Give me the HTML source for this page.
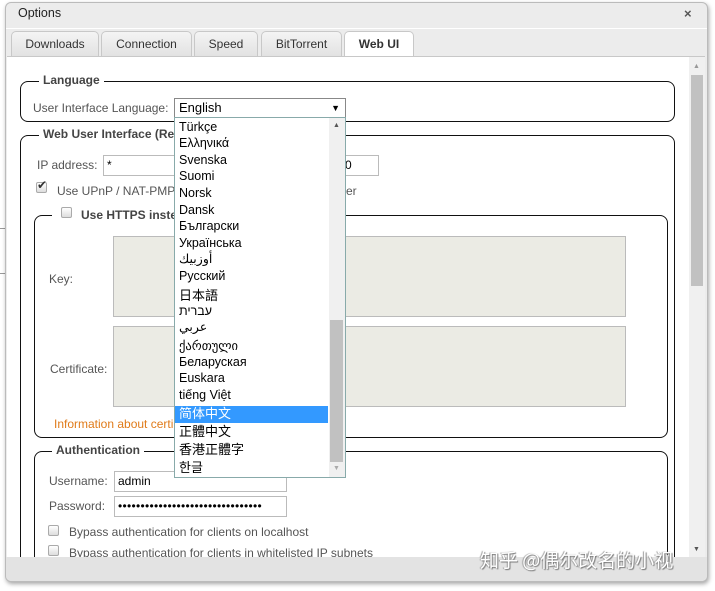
<!DOCTYPE html>
<html><head><meta charset="utf-8">
<style>
*{box-sizing:border-box;margin:0;padding:0}
body{width:715px;height:591px;overflow:hidden;background:#fff;font-family:"Liberation Sans","Noto Sans CJK SC",sans-serif;position:relative}
.a{position:absolute}
.dlg{left:5px;top:2px;width:703px;height:580px;background:#ececec;border:1px solid #bbb;border-radius:6px;box-shadow:1px 2px 4px rgba(0,0,0,.35)}
.lbl{font-size:12px;color:#555}
.fs{border:1px solid #111;border-radius:8px}
.lg{background:#fff;padding:0 4px;font-size:12px;font-weight:bold;color:#444}
.tab{top:31px;height:25px;border:1px solid #c8c8c8;border-bottom:none;border-radius:5px 5px 0 0;background:linear-gradient(#f4f4f4,#e2e2e2);font-size:12px;color:#333;text-align:center;line-height:24px}
.inp{border:1px solid #bbb;background:#fff;font-size:12px;padding-left:3px}
.ta{background:#ebebe4;border:1px solid #bbb}
.cb{width:11px;height:11px;border:1px solid #aaa;border-radius:2px;background:linear-gradient(#fff,#ddd)}
.it{left:179px;font-size:12.5px;color:#000;line-height:17px;height:17px;white-space:nowrap}
.cj{font-size:13px}
</style></head><body>
<div class="a" style="left:0;top:228px;width:6px;height:1px;background:#999"></div>
<div class="a" style="left:0;top:273px;width:6px;height:1px;background:#999"></div>
<div class="a dlg"></div>
<div class="a" style="left:18px;top:6px;font-size:12.5px;color:#222">Options</div>
<div class="a" style="left:684px;top:6px;font-size:13px;font-weight:bold;color:#555">×</div>
<div class="a" style="left:6px;top:28px;width:701px;height:1px;background:#fff"></div>
<div class="a tab" style="left:11px;width:88px">Downloads</div>
<div class="a tab" style="left:101px;width:91px">Connection</div>
<div class="a tab" style="left:194px;width:64px">Speed</div>
<div class="a tab" style="left:261px;width:81px">BitTorrent</div>
<div class="a tab" style="left:344px;width:70px;background:#fff;font-weight:bold;height:27px">Web UI</div>
<div class="a" style="left:7px;top:56px;width:698px;height:1px;background:#c8c8c8"></div>
<div class="a" style="left:7px;top:57px;width:682px;height:500px;background:#fff"></div>
<div class="a" style="left:689px;top:57px;width:16px;height:500px;background:#f0f0f0"></div>
<div class="a" style="left:691px;top:75px;width:12px;height:211px;background:#c1c1c1"></div>
<div class="a" style="left:693px;top:63px;font-size:7px;color:#999">▲</div>
<div class="a" style="left:693px;top:546px;font-size:7px;color:#555">▼</div>

<div class="a fs" style="left:20px;top:81px;width:655px;height:41px"></div>
<div class="a lg" style="left:39px;top:73px">Language</div>
<div class="a lbl" style="left:33px;top:101px">User Interface Language:</div>

<div class="a fs" style="left:20px;top:135px;width:655px;height:440px"></div>
<div class="a lg" style="left:39px;top:127px">Web User Interface (Re</div>
<div class="a lbl" style="left:37px;top:158px">IP address:</div>
<div class="a inp" style="left:103px;top:155px;width:80px;height:21px;line-height:19px">*</div>
<div class="a inp" style="left:330px;top:155px;width:49px;height:21px;line-height:19px;padding-left:14px">0</div>
<div class="a cb" style="left:36px;top:182px"></div>
<div class="a" style="left:37px;top:178px;font-size:12px;color:#333">✔</div>
<div class="a lbl" style="left:57px;top:184px">Use UPnP / NAT-PMP</div>
<div class="a lbl" style="left:346px;top:184px">er</div>

<div class="a fs" style="left:34px;top:215px;width:634px;height:223px"></div>
<div class="a" style="left:52px;top:205px;width:125px;height:18px;background:#fff"></div>
<div class="a cb" style="left:61px;top:207px"></div>
<div class="a" style="left:81px;top:208px;font-size:12px;font-weight:bold;color:#444">Use HTTPS inste</div>
<div class="a lbl" style="left:49px;top:272px">Key:</div>
<div class="a ta" style="left:113px;top:236px;width:513px;height:81px"></div>
<div class="a lbl" style="left:50px;top:362px">Certificate:</div>
<div class="a ta" style="left:113px;top:326px;width:513px;height:81px"></div>
<div class="a" style="left:54px;top:417px;font-size:12px;color:#e07b1a">Information about certi</div>

<div class="a fs" style="left:34px;top:451px;width:634px;height:130px"></div>
<div class="a lg" style="left:52px;top:443px">Authentication</div>
<div class="a lbl" style="left:49px;top:474px">Username:</div>
<div class="a inp" style="left:114px;top:471px;width:173px;height:21px;line-height:19px;color:#000">admin</div>
<div class="a lbl" style="left:49px;top:499px">Password:</div>
<div class="a inp" style="left:114px;top:496px;width:173px;height:21px;line-height:19px;font-size:12px;color:#000;letter-spacing:0.3px;overflow:hidden;white-space:nowrap">••••••••••••••••••••••••••••••••</div>
<div class="a cb" style="left:48px;top:525px"></div>
<div class="a lbl" style="left:69px;top:525px">Bypass authentication for clients on localhost</div>
<div class="a cb" style="left:48px;top:545px"></div>
<div class="a lbl" style="left:69px;top:546px">Bypass authentication for clients in whitelisted IP subnets</div>
<div class="a" style="left:6px;top:557px;width:701px;height:24px;background:#e3e3e3;border-radius:0 0 6px 6px"></div>

<div class="a" style="left:174px;top:98px;width:172px;height:20px;border:1px solid #888;background:#fff;font-size:13px;line-height:18px;padding-left:4px;color:#000">English<span class="a" style="right:5px;top:0;font-size:9px">▼</span></div>
<div class="a" style="left:174px;top:117px;width:172px;height:361px;border:1px solid #8aa;background:#fff"></div>
<div class="a" style="left:329px;top:118px;width:16px;height:359px;background:#f0f0f0"></div>
<div class="a" style="left:330px;top:320px;width:13px;height:142px;background:#c1c1c1"></div>
<div class="a" style="left:333px;top:122px;font-size:7px;color:#555">▲</div>
<div class="a" style="left:333px;top:465px;font-size:7px;color:#aaa">▼</div>
<div class="a" style="left:175px;top:406px;width:153px;height:17px;background:#3399ff"></div>
<div class="a it" style="top:119px">Türkçe</div>
<div class="a it" style="top:135px">Ελληνικά</div>
<div class="a it" style="top:152px">Svenska</div>
<div class="a it" style="top:168px">Suomi</div>
<div class="a it" style="top:185px">Norsk</div>
<div class="a it" style="top:202px">Dansk</div>
<div class="a it" style="top:218px">Български</div>
<div class="a it" style="top:235px">Українська</div>
<div class="a it" style="top:251px">أوزبيك</div>
<div class="a it" style="top:268px">Русский</div>
<div class="a it cj" style="top:287px">日本語</div>
<div class="a it" style="top:303px">עברית</div>
<div class="a it" style="top:319px">عربي</div>
<div class="a it" style="top:338px">ქართული</div>
<div class="a it" style="top:354px">Беларуская</div>
<div class="a it" style="top:370px">Euskara</div>
<div class="a it" style="top:387px">tiếng Việt</div>
<div class="a it cj" style="top:405px;color:#fff">简体中文</div>
<div class="a it cj" style="top:423px">正體中文</div>
<div class="a it cj" style="top:441px">香港正體字</div>
<div class="a it cj" style="top:459px">한글</div>

<div class="a" style="left:480px;top:546px;font-size:19px;color:#fff;text-shadow:1px 1px 1px #777,-1px 0 1px #999;font-family:'Noto Sans CJK SC',sans-serif">知乎 @偶尔改名的小视</div>
</body></html>
